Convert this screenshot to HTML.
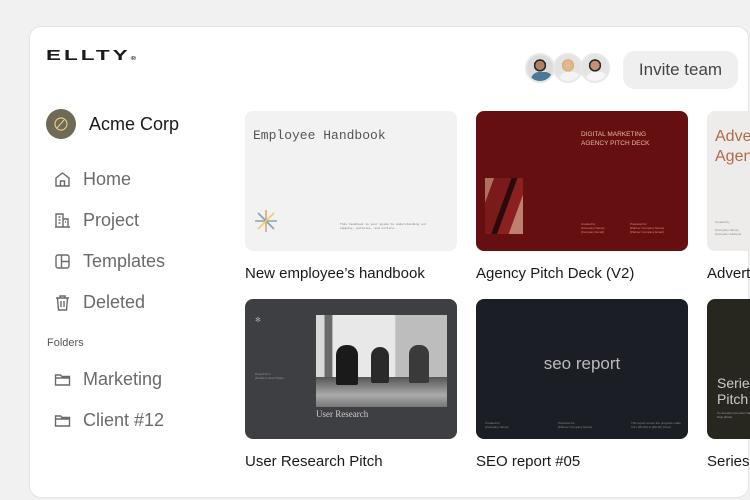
<!DOCTYPE html>
<html><head><meta charset="utf-8"><style>
*{margin:0;padding:0;box-sizing:border-box}
html,body{width:750px;height:500px;overflow:hidden}
body{background:#f1f1f1;font-family:"Liberation Sans",sans-serif}
#w{position:relative;width:750px;height:500px;overflow:hidden}
.card{position:absolute;left:29px;top:26px;width:720px;height:472px;background:#fff;border:1px solid #e4e4e4;border-radius:12px;overflow:hidden}
.a{position:absolute}
.nav{position:absolute;left:54px;font-size:18px;color:#6a6a6a;display:flex;align-items:center;height:24px}
.nav svg{width:17px;height:17px;margin-right:12px;stroke:#6a6a6a;fill:none;stroke-width:1.4}
.th{position:absolute;width:212px;height:140px;border-radius:8px;overflow:hidden}
.lb{position:absolute;font-size:15px;color:#1a1a1a;white-space:nowrap}
.av{position:absolute;top:53px;width:30px;height:30px;border-radius:50%;border:2px solid #e8e8e8;background:#ddd;overflow:hidden}
.t{font-size:3px;color:#ccc;position:absolute;line-height:4px;white-space:nowrap}
</style></head><body><div id="w">
<div class="card"></div>
<div class="a" style="left:46px;top:48px;font-size:15px;line-height:15px;font-weight:bold;letter-spacing:2px;color:#1b1b1b;transform:scaleX(1.5);transform-origin:left top;white-space:nowrap">ELLTY<span style="font-size:5px;letter-spacing:0">®</span></div>
<div class="a" style="left:46px;top:109px;width:30px;height:30px;border-radius:50%;background:#6f6a55"><svg width="30" height="30"><circle cx="15" cy="15" r="6" stroke="#e8c98a" fill="none" stroke-width="1.2"/><path d="M11 19 L18 11" stroke="#e8c98a" stroke-width="1.2"/></svg></div>
<div class="a" style="left:89px;top:114px;font-size:18px;color:#1a1a1a">Acme Corp</div>
<div class="nav" style="top:167px"><svg viewBox="0 0 17 17"><path d="M2 7 L8.5 2 L15 7 V15 H2 Z M6.5 15 V10 H10.5 V15"/></svg>Home</div>
<div class="nav" style="top:208px"><svg viewBox="0 0 17 17"><path d="M2 15 V2 H9 V15 M9 7 H14 V15 M1 15 H16 M4.5 5 H6.5 M4.5 8 H6.5 M4.5 11 H6.5 M11 10 H12"/></svg>Project</div>
<div class="nav" style="top:249px"><svg viewBox="0 0 17 17"><rect x="2" y="2" width="13" height="13" rx="2"/><path d="M7.5 2 V15 M7.5 8.5 H15"/></svg>Templates</div>
<div class="nav" style="top:290px"><svg viewBox="0 0 17 17"><path d="M2 4 H15 M6 4 V2 H11 V4 M3.5 4 L4.5 16 H12.5 L13.5 4 M7 7 V13 M10 7 V13"/></svg>Deleted</div>
<div class="a" style="left:47px;top:337px;font-size:11px;color:#555">Folders</div>
<div class="nav" style="top:367px"><svg viewBox="0 0 17 17"><path d="M1.5 4 H6.5 L8 5.5 H15.5 V14 H1.5 Z M1.5 7 H15.5"/></svg>Marketing</div>
<div class="nav" style="top:408px"><svg viewBox="0 0 17 17"><path d="M1.5 4 H6.5 L8 5.5 H15.5 V14 H1.5 Z M1.5 7 H15.5"/></svg>Client #12</div>

<div class="av" style="left:525px;background:radial-gradient(circle at 50% 40%,#b08060 0 22%,#2a2a2a 23% 30%,#dcdcdc 31%);"><div style="position:absolute;bottom:0;left:4px;width:22px;height:9px;background:#4a7896;border-radius:8px 8px 0 0"></div></div>
<div class="av" style="left:553px;background:radial-gradient(circle at 50% 40%,#e0b898 0 22%,#d8b070 23% 30%,#e4e4e4 31%);"><div style="position:absolute;bottom:0;left:4px;width:22px;height:9px;background:#f4f4f4;border-radius:8px 8px 0 0"></div></div>
<div class="av" style="left:580px;background:radial-gradient(circle at 50% 40%,#c89070 0 22%,#2a2a2a 23% 30%,#e4e4e4 31%);"><div style="position:absolute;bottom:0;left:4px;width:22px;height:9px;background:#f6f6f6;border-radius:8px 8px 0 0"></div></div>
<div class="a" style="left:623px;top:51px;width:115px;height:38px;background:#efefef;border-radius:12px;font-size:17px;color:#444;text-align:center;line-height:38px">Invite team</div>

<div class="th" style="left:245px;top:111px;background:#f2f2f2">
<div class="a" style="left:8px;top:17px;font-family:'Liberation Mono',monospace;font-size:13px;color:#555">Employee Handbook</div>
<svg class="a" style="left:9px;top:98px" width="24" height="24"><g stroke-width="1.6"><path d="M12 1V23" stroke="#e0a080"/><path d="M1 12H23" stroke="#90a0b0"/><path d="M4 4L20 20" stroke="#80a0c0"/><path d="M20 4L4 20" stroke="#f0d060"/></g></svg>
<div class="t" style="left:95px;top:112px;color:#777;font-family:'Liberation Mono',monospace">This handbook is your guide to understanding our<br>company, policies, and culture.</div>
</div>
<div class="th" style="left:476px;top:111px;background:#650f10">
<div class="a" style="left:105px;top:19px;font-size:6.5px;color:#e8b8a8;line-height:9px;white-space:nowrap">DIGITAL MARKETING<br>AGENCY PITCH DECK</div>
<div class="a" style="left:9px;top:67px;width:38px;height:56px;background:linear-gradient(110deg,#b07060 0 15%,#7a1a1a 16% 45%,#2a0a0a 46% 55%,#8a2020 56% 75%,#c08070 76%)"></div>
<div class="t" style="left:105px;top:111px;color:#d09080">Created by<br>[Company Name]<br>[Company Email]</div>
<div class="t" style="left:154px;top:111px;color:#d09080">Prepared for<br>[Partner Company Name]<br>[Partner Company Email]</div>
</div>
<div class="th" style="left:707px;top:111px;width:43px;border-radius:8px 0 0 8px;background:#eeeceb">
<div class="a" style="left:8px;top:16px;font-size:16px;color:#b06a48;line-height:20px;white-space:nowrap">Advertising<br>Agency</div>
<div class="t" style="left:8px;top:109px;color:#888">Created by<br><br>[Company Name]<br>[Company Address]</div>
</div>
<div class="lb" style="left:245px;top:265px">New employee’s handbook</div>
<div class="lb" style="left:476px;top:265px">Agency Pitch Deck (V2)</div>
<div class="lb" style="left:707px;top:265px;width:43px;overflow:hidden">Advertising</div>

<div class="th" style="left:245px;top:299px;background:#3e3f42">
<div class="a" style="left:10px;top:17px;color:#aaa;font-size:7px">✻</div>
<div class="t" style="left:10px;top:73px;color:#999;font-family:'Liberation Serif',serif">Prepared for:<br>[Partner Contact Name]</div>
<div class="a" style="left:71px;top:16px;width:131px;height:92px;background:linear-gradient(90deg,#d8d8d8 0 6%,#6a6a6a 7% 12%,#e8e8e8 13% 60%,#bdbdbd 61%);"><div style="position:absolute;left:0;bottom:0;width:100%;height:30px;background:linear-gradient(#555,#aaa 60%,#777)"></div><div style="position:absolute;left:20px;top:30px;width:22px;height:40px;background:#1a1a1a;border-radius:10px 10px 2px 2px"></div><div style="position:absolute;left:55px;top:32px;width:18px;height:36px;background:#2a2a2a;border-radius:9px 9px 2px 2px"></div><div style="position:absolute;left:93px;top:30px;width:20px;height:38px;background:#3a3a3a;border-radius:9px 9px 2px 2px"></div></div>
<div class="a" style="left:71px;top:110px;font-family:'Liberation Serif',serif;font-size:9px;color:#ccc">User Research</div>
</div>
<div class="th" style="left:476px;top:299px;background:#1b1e24">
<div class="a" style="left:0;width:212px;top:55px;text-align:center;font-size:17px;color:#bbb">seo report</div>
<div class="t" style="left:9px;top:122px;color:#888">Created for<br>[Company Name]</div>
<div class="t" style="left:82px;top:122px;color:#888">Prepared for<br>[Partner Company Name]</div>
<div class="t" style="left:155px;top:122px;color:#888">This report covers the progress made<br>from [Month] to [Month] [Year]</div>
</div>
<div class="th" style="left:707px;top:299px;width:43px;border-radius:8px 0 0 8px;background:#27261f">
<div class="a" style="left:10px;top:76px;font-size:14px;color:#ccc;line-height:16px;white-space:nowrap">Series A<br>Pitch</div>
<div class="t" style="left:10px;top:112px;color:#999">Co-founders [Contact Name]<br>Date [Date]</div>
</div>
<div class="lb" style="left:245px;top:453px">User Research Pitch</div>
<div class="lb" style="left:476px;top:453px">SEO report #05</div>
<div class="lb" style="left:707px;top:453px;width:43px;overflow:hidden">Series A</div>
</div></body></html>
